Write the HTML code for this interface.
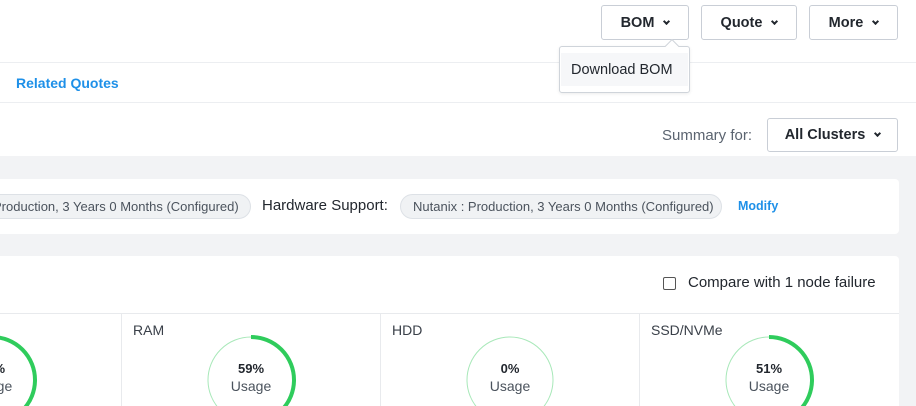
<!DOCTYPE html>
<html><head><meta charset="utf-8"><style>
*{box-sizing:border-box;margin:0;padding:0}
body{width:916px;height:406px;overflow:hidden;background:#f2f3f5;font-family:"Liberation Sans",sans-serif;color:#22272e;position:relative}
.abs{position:absolute}
.btn{position:absolute;top:5px;height:35px;border:1px solid #c9ced6;border-radius:3px;background:#fff;font-size:14.5px;font-weight:600;display:flex;align-items:center;justify-content:center;gap:10px;color:#22272e}
.chev{width:5px;height:5px;border-right:2px solid #22272e;border-bottom:2px solid #22272e;transform:rotate(45deg);margin-top:-3px}
.pill{position:absolute;height:25px;border:1px solid #dde1e6;background:#f0f2f4;border-radius:13px;font-size:13px;color:#4b535d;display:flex;align-items:center;padding:0 12px;white-space:nowrap}
.col{position:absolute;top:314px;height:92px;border-left:1px solid #e8eaed}
.lbl{position:absolute;font-size:14px;color:#3a4049}
.ctext{position:absolute;width:88px;text-align:center;font-size:13px}
</style></head><body>
<div class="abs" style="left:0;top:0;width:916px;height:156px;background:#fff"></div>
<div class="abs" style="left:0;top:62px;width:916px;height:1px;background:#eceef1"></div>
<div class="abs" style="left:0;top:102px;width:916px;height:1px;background:#eceef1"></div>
<div class="btn" style="left:601px;width:88px">BOM <span class="chev"></span></div>
<div class="btn" style="left:701px;width:96px">Quote <span class="chev"></span></div>
<div class="btn" style="left:809px;width:89px">More <span class="chev"></span></div>
<div class="abs" style="left:559px;top:46px;width:131px;height:47px;border:1px solid #cfd4da;border-radius:3px;background:#fff;box-shadow:0 1px 3px rgba(0,0,0,.08)">
<div style="margin:6px 1px;height:33px;background:#f6f7f9;font-size:14.5px;display:flex;align-items:center;padding-left:10px">Download BOM</div></div>
<div class="abs" style="left:667px;top:41px;width:10px;height:10px;background:#fff;border-left:1px solid #cfd4da;border-top:1px solid #cfd4da;transform:rotate(45deg)"></div>
<div class="abs" style="left:16px;top:75px;font-size:14px;font-weight:600;color:#1e90e8">Related Quotes</div>
<div class="abs" style="left:662px;top:127px;font-size:15px;color:#5b6470">Summary for:</div>
<div class="btn" style="left:767px;top:118px;width:131px;height:34px">All Clusters <span class="chev"></span></div>
<div class="abs" style="left:0;top:179px;width:899px;height:55px;background:#fff;border-radius:0 4px 4px 0"></div>
<div class="pill" style="left:-20px;top:194px;width:271px">Production, 3 Years 0 Months (Configured)</div>
<div class="abs" style="left:262px;top:197px;font-size:15px">Hardware Support:</div>
<div class="pill" style="left:400px;top:194px;width:322px">Nutanix : Production, 3 Years 0 Months (Configured)</div>
<div class="abs" style="left:738px;top:199px;font-size:12.5px;font-weight:700;color:#1e90e8">Modify</div>
<div class="abs" style="left:0;top:256px;width:899px;height:150px;background:#fff;border-radius:0 4px 0 0"></div>
<div class="abs" style="left:663px;top:277px;width:13px;height:13px;border:1px solid #555;border-radius:2px"></div>
<div class="abs" style="left:688px;top:274px;font-size:15px">Compare with 1 node failure</div>
<div class="abs" style="left:0;top:313px;width:899px;height:1px;background:#e8eaed"></div>
<div class="col" style="left:121px"></div><div class="col" style="left:380px"></div><div class="col" style="left:639px"></div>
<div class="lbl" style="left:133px;top:322px">RAM</div>
<div class="lbl" style="left:392px;top:322px">HDD</div>
<div class="lbl" style="left:651px;top:322px">SSD/NVMe</div>
<svg class="abs" style="left:0;top:0" width="916" height="406">
<g fill="none">
<circle cx="-8" cy="380" r="43" stroke="#a8e8b9" stroke-width="1"/>
<circle cx="-8" cy="380" r="43" stroke="#2fcc5c" stroke-width="4" stroke-dasharray="160 300" transform="rotate(-90 -8 380)"/>
<circle cx="251" cy="380" r="43" stroke="#a8e8b9" stroke-width="1"/>
<circle cx="251" cy="380" r="43" stroke="#2fcc5c" stroke-width="4" stroke-dasharray="159 300" transform="rotate(-90 251 380)"/>
<circle cx="510" cy="380" r="43" stroke="#a8e8b9" stroke-width="1"/>
<circle cx="769" cy="380" r="43" stroke="#a8e8b9" stroke-width="1"/>
<circle cx="769" cy="380" r="43" stroke="#2fcc5c" stroke-width="4" stroke-dasharray="138 300" transform="rotate(-90 769 380)"/>
</g></svg>
<div class="ctext" style="left:-52px;top:361px;font-weight:700">59%</div>
<div class="ctext" style="left:-52px;top:378px;color:#4b535d;font-size:14px">Usage</div>
<div class="ctext" style="left:207px;top:361px;font-weight:700">59%</div>
<div class="ctext" style="left:207px;top:378px;color:#4b535d;font-size:14px">Usage</div>
<div class="ctext" style="left:466px;top:361px;font-weight:700">0%</div>
<div class="ctext" style="left:466px;top:378px;color:#4b535d;font-size:14px">Usage</div>
<div class="ctext" style="left:725px;top:361px;font-weight:700">51%</div>
<div class="ctext" style="left:725px;top:378px;color:#4b535d;font-size:14px">Usage</div>
</body></html>
